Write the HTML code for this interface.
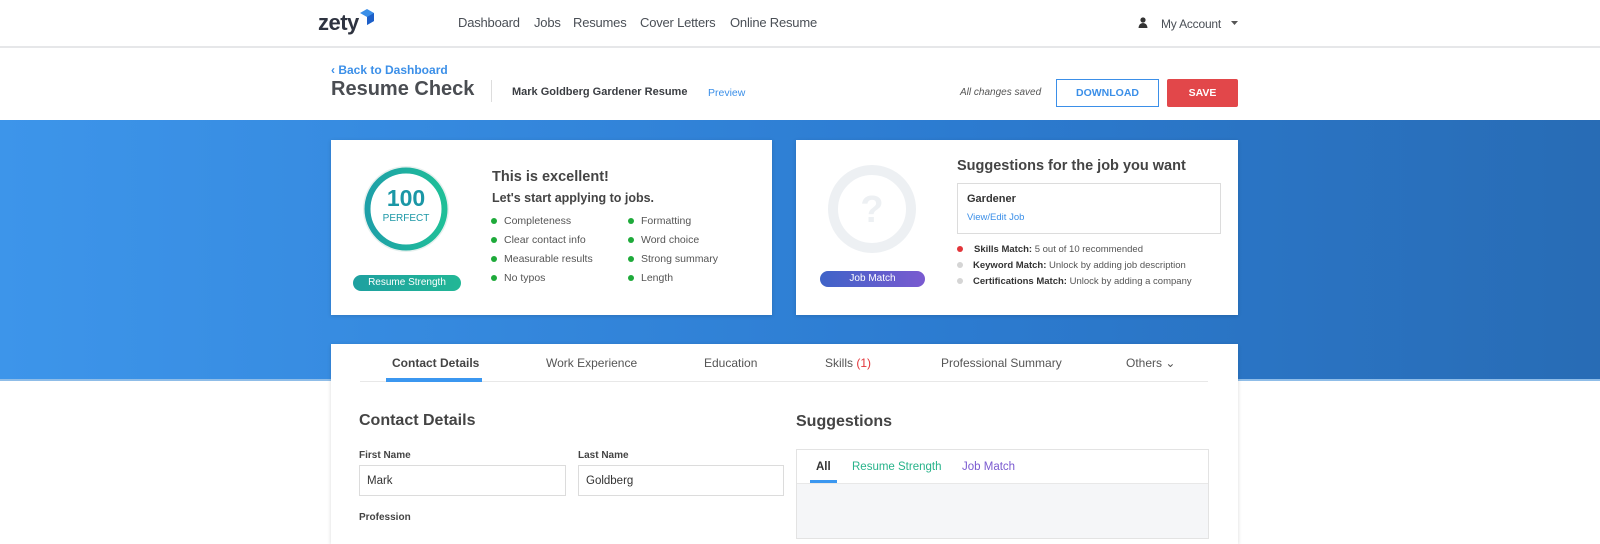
<!DOCTYPE html>
<html><head><style>
*{box-sizing:border-box;margin:0;padding:0}
body{width:1600px;height:532px;overflow:hidden;background:#fff;font-family:"Liberation Sans",Arial,sans-serif;color:#333;position:relative}
.abs{position:absolute}
.hdr{left:0;top:0;width:1600px;height:48px;border-bottom:2px solid #e6e7e9;background:#fff}
.nav a{position:absolute;top:15px;color:#4a4f56;font-family:"Liberation Sans",sans-serif;font-size:13px;letter-spacing:-0.2px;text-decoration:none}
.band{left:0;top:120px;width:1600px;height:261px;background:linear-gradient(90deg,#3d95ea,#2c7bd0 60%,#286cb5);border-bottom:2px solid #8fbde8}
.card{background:#fff;box-shadow:0 1px 4px rgba(0,0,0,.15)}
.li{position:absolute;font-size:10.5px;color:#555}
.li:before{content:"";position:absolute;left:-13px;top:3px;width:6px;height:6px;border-radius:50%;background:#1eaa3a}
.btn{position:absolute;font-size:10.5px;font-weight:bold;text-align:center}
</style></head><body>
<div class="abs hdr"></div>
<div class="abs" style="left:318px;top:10px;font-size:22px;font-weight:bold;color:#2e3340;letter-spacing:-0.5px">zety</div>
<svg class="abs" style="left:357px;top:9px" width="20" height="22" viewBox="0 0 20 22"><polygon points="3,4 10,0 17,4 17,12 10,16 10,8" fill="#3b8fe8"/><polygon points="10,8 17,4 17,12 10,16" fill="#1d5fc8"/></svg>
<div class="nav">
<a style="left:458px">Dashboard</a><a style="left:534px">Jobs</a><a style="left:573px">Resumes</a><a style="left:640px">Cover Letters</a><a style="left:730px">Online Resume</a>
<a style="left:1161px;top:17px;font-size:12px">My Account</a>
</div>
<svg class="abs" style="left:1138px;top:17px" width="10" height="11" viewBox="0 0 10 11"><circle cx="5" cy="3" r="2.6" fill="#333"/><path d="M0.5 11 Q1 6 5 6 Q9 6 9.5 11Z" fill="#333"/></svg>
<svg class="abs" style="left:1231px;top:21px" width="8" height="5"><polygon points="0,0 7,0 3.5,4" fill="#555"/></svg>

<div class="abs" style="left:331px;top:63px;font-size:12px;font-weight:bold;color:#3b8fe8">‹ Back to Dashboard</div>
<div class="abs" style="left:331px;top:78px;font-size:20px;font-weight:bold;color:#4a4d52">Resume Check</div>
<div class="abs" style="left:491px;top:80px;width:1px;height:22px;background:#ddd"></div>
<div class="abs" style="left:512px;top:86px;font-size:11px;font-weight:bold;color:#3a3d42">Mark Goldberg Gardener Resume</div>
<div class="abs" style="left:708px;top:87px;font-size:10.5px;color:#3b8fe8">Preview</div>
<div class="abs" style="left:960px;top:87px;font-size:10px;font-style:italic;color:#555">All changes saved</div>
<div class="btn" style="left:1056px;top:79px;width:103px;height:28px;border:1px solid #3b8fe8;color:#3b8fe8;line-height:26px">DOWNLOAD</div>
<div class="btn" style="left:1167px;top:79px;width:71px;height:28px;background:#e2474a;color:#fff;line-height:28px;border-radius:2px">SAVE</div>

<div class="abs band"></div>

<div class="abs card" style="left:331px;top:140px;width:441px;height:175px"></div>
<svg class="abs" style="left:361px;top:164px" width="90" height="90" viewBox="0 0 90 90"><defs><linearGradient id="g" x1="0" y1="0" x2="1" y2="0"><stop offset="0" stop-color="#1ea0a8"/><stop offset="1" stop-color="#1fbf98"/></linearGradient></defs><circle cx="45" cy="45" r="43" fill="#e6f0ee"/><circle cx="45" cy="45" r="38.5" fill="#fff" stroke="url(#g)" stroke-width="6"/></svg>
<div class="abs" style="left:361px;top:185px;width:90px;text-align:center;font-size:23px;font-weight:bold;color:#1b97a6">100</div>
<div class="abs" style="left:361px;top:213px;width:90px;text-align:center;font-size:10px;color:#1b97a6">PERFECT</div>
<div class="btn" style="left:353px;top:275px;width:108px;height:16px;border-radius:8px;background:linear-gradient(90deg,#1ea0a0,#22b796);color:#fff;font-weight:normal;font-size:10px;line-height:16px">Resume Strength</div>
<div class="abs" style="left:492px;top:169px;font-size:14.5px;font-weight:bold;color:#444">This is excellent!</div>
<div class="abs" style="left:492px;top:191px;font-size:12.5px;font-weight:bold;color:#444">Let's start applying to jobs.</div>
<div class="li" style="left:504px;top:215px">Completeness</div>
<div class="li" style="left:504px;top:234px">Clear contact info</div>
<div class="li" style="left:504px;top:253px">Measurable results</div>
<div class="li" style="left:504px;top:272px">No typos</div>
<div class="li" style="left:641px;top:215px">Formatting</div>
<div class="li" style="left:641px;top:234px">Word choice</div>
<div class="li" style="left:641px;top:253px">Strong summary</div>
<div class="li" style="left:641px;top:272px">Length</div>

<div class="abs card" style="left:796px;top:140px;width:442px;height:175px"></div>
<svg class="abs" style="left:827px;top:164px" width="90" height="90" viewBox="0 0 90 90"><circle cx="45" cy="45" r="39" fill="none" stroke="#edf0f3" stroke-width="10"/><text x="45" y="58" text-anchor="middle" font-family="Liberation Sans" font-weight="bold" font-size="38" fill="#edf0f3">?</text></svg>
<div class="btn" style="left:820px;top:271px;width:105px;height:16px;border-radius:8px;background:linear-gradient(90deg,#3f63c8,#7a5ad0);color:#fff;font-weight:normal;font-size:10px;line-height:16px">Job Match</div>
<div class="abs" style="left:957px;top:158px;font-size:14.5px;font-weight:bold;color:#444">Suggestions for the job you want</div>
<div class="abs" style="left:957px;top:183px;width:264px;height:51px;border:1px solid #dcdcdc"></div>
<div class="abs" style="left:967px;top:193px;font-size:11px;font-weight:bold;color:#333">Gardener</div>
<div class="abs" style="left:967px;top:212px;font-size:9.5px;color:#3b8fe8">View/Edit Job</div>
<div class="abs" style="left:957px;top:246px;width:6px;height:6px;border-radius:50%;background:#e2353a"></div>
<div class="abs" style="left:957px;top:262px;width:6px;height:6px;border-radius:50%;background:#d5d5d5"></div>
<div class="abs" style="left:957px;top:278px;width:6px;height:6px;border-radius:50%;background:#d5d5d5"></div>
<div class="abs" style="left:974px;top:244px;font-size:9.5px;color:#555"><b style="color:#333">Skills Match:</b> 5 out of 10 recommended</div>
<div class="abs" style="left:973px;top:260px;font-size:9.5px;color:#555"><b style="color:#333">Keyword Match:</b> Unlock by adding job description</div>
<div class="abs" style="left:973px;top:276px;font-size:9.5px;color:#555"><b style="color:#333">Certifications Match:</b> Unlock by adding a company</div>

<div class="abs card" style="left:331px;top:344px;width:907px;height:200px"></div>
<div class="abs" style="left:360px;top:381px;width:848px;height:1px;background:#e8e8e8"></div>
<div class="abs" style="left:386px;top:378px;width:96px;height:4px;background:#3b97f0"></div>
<div class="abs" style="left:392px;top:356px;font-size:12px;font-weight:bold;color:#444">Contact Details</div>
<div class="abs" style="left:546px;top:356px;font-size:12px;color:#555">Work Experience</div>
<div class="abs" style="left:704px;top:356px;font-size:12px;color:#555">Education</div>
<div class="abs" style="left:825px;top:356px;font-size:12px;color:#555">Skills <span style="color:#e2353a">(1)</span></div>
<div class="abs" style="left:941px;top:356px;font-size:12px;color:#555">Professional Summary</div>
<div class="abs" style="left:1126px;top:356px;font-size:12px;color:#555">Others ⌄</div>

<div class="abs" style="left:359px;top:412px;font-size:16px;font-weight:bold;color:#444">Contact Details</div>
<div class="abs" style="left:796px;top:413px;font-size:16px;font-weight:bold;color:#444">Suggestions</div>
<div class="abs" style="left:359px;top:450px;font-size:10px;font-weight:bold;color:#444">First Name</div>
<div class="abs" style="left:578px;top:450px;font-size:10px;font-weight:bold;color:#444">Last Name</div>
<div class="abs" style="left:359px;top:465px;width:207px;height:31px;border:1px solid #dcdcdc;font-size:11.5px;padding:9px 7px;color:#333">Mark</div>
<div class="abs" style="left:578px;top:465px;width:206px;height:31px;border:1px solid #dcdcdc;font-size:11.5px;padding:9px 7px;color:#333">Goldberg</div>
<div class="abs" style="left:359px;top:512px;font-size:10px;font-weight:bold;color:#444">Profession</div>

<div class="abs" style="left:796px;top:449px;width:413px;height:90px;border:1px solid #e3e3e3;background:#f5f6f8"></div>
<div class="abs" style="left:797px;top:450px;width:411px;height:34px;background:#fff;border-bottom:1px solid #e8e8e8"></div>
<div class="abs" style="left:816px;top:461px;font-size:11.5px;font-weight:bold;color:#333">All</div>
<div class="abs" style="left:852px;top:461px;font-size:11.5px;color:#27b38a">Resume Strength</div>
<div class="abs" style="left:962px;top:461px;font-size:11.5px;color:#7a5ad0">Job Match</div>
<div class="abs" style="left:810px;top:480px;width:27px;height:3px;background:#3b97f0"></div>
</body></html>
